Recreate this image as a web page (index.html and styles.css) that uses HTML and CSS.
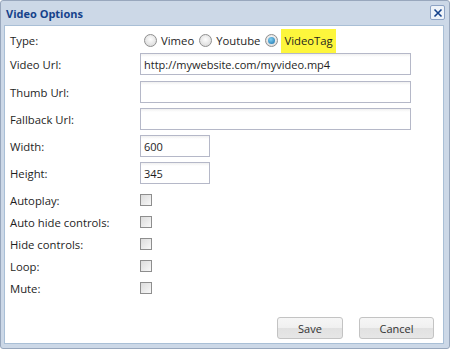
FILE: index.html
```html
<!DOCTYPE html>
<html lang="en">
<head>
    <meta charset="UTF-8">
    <title>Video Options</title>
    <link rel="stylesheet" href="styles.css">
</head>
<body>
    <div class="dialog">
        <div class="dialog-header">
            <span class="dialog-title">Video Options</span>
            <span class="close-btn">
                <svg width="10" height="10" viewBox="0 0 10 10"><path d="M1.5 1.5 L8.5 8.5 M8.5 1.5 L1.5 8.5" stroke="#15428b" stroke-width="1.6"/></svg>
            </span>
        </div>
        <div class="dialog-body">
            <div class="row row-type">
                <label>Type:</label>
                <div class="radios">
                    <span class="radio"></span><span class="radio-label">Vimeo</span>
                    <span class="radio"></span><span class="radio-label">Youtube</span>
                    <span class="radio checked"></span><span class="radio-label highlight">VideoTag</span>
                </div>
            </div>
            <div class="row row-input first">
                <label>Video Url:</label>
                <input type="text" class="wide" value="http://mywebsite.com/myvideo.mp4">
            </div>
            <div class="row row-input">
                <label>Thumb Url:</label>
                <input type="text" class="wide">
            </div>
            <div class="row row-input">
                <label>Fallback Url:</label>
                <input type="text" class="wide">
            </div>
            <div class="row row-input">
                <label>Width:</label>
                <input type="text" class="narrow" value="600">
            </div>
            <div class="row row-input">
                <label>Height:</label>
                <input type="text" class="narrow" value="345">
            </div>
            <div class="row row-check"><label>Autoplay:</label><span class="checkbox"></span></div>
            <div class="row row-check"><label>Auto hide controls:</label><span class="checkbox"></span></div>
            <div class="row row-check"><label>Hide controls:</label><span class="checkbox"></span></div>
            <div class="row row-check"><label>Loop:</label><span class="checkbox"></span></div>
            <div class="row row-check"><label>Mute:</label><span class="checkbox"></span></div>

            <div class="buttons">
                <button class="save">Save</button>
                <button class="cancel">Cancel</button>
            </div>
        </div>
    </div>
</body>
</html>
```
FILE: styles.css
```css
body {
    margin: 0;
    padding: 0;
    font-family: "Open Sans", "Liberation Sans", sans-serif;
    font-size: 11.3px;
    color: #1e1e1e;
    background: #fff;
}
.dialog {
    box-sizing: border-box;
    width: 450px;
    height: 349px;
    border: 1px solid #98a7bd;
    border-radius: 3px;
    background: #ccd8e7;
    display: flex;
    flex-direction: column;
    padding: 0 5px 4px 3px;
}
.dialog-header {
    height: 24px;
    display: flex;
    align-items: center;
    justify-content: space-between;
    padding-left: 2px;
}
.dialog-title {
    font-weight: bold;
    font-size: 11px;
    color: #15428b;
}
.close-btn {
    width: 13px;
    height: 13px;
    border: 1px solid #8da3c4;
    border-radius: 2px;
    background: #eef3f9;
    display: flex;
    align-items: center;
    justify-content: center;
    margin-right: -1px;
    margin-top: -1px;
}
.dialog-body {
    flex: 1;
    background: #fff;
    border: 1px solid #a9bfd6;
    padding: 2px 0 0 5px;
    display: flex;
    flex-direction: column;
}
.row {
    display: flex;
    align-items: center;
}
.row label {
    width: 130px;
}
.row-type {
    height: 25px;
}
.row-input {
    height: 22px;
    margin-bottom: 5px;
}
.row-input.first {
    margin-bottom: 6px;
}
.row-check {
    height: 22px;
}
.radios {
    display: flex;
    align-items: center;
    margin-left: 4px;
}
.radio {
    box-sizing: border-box;
    width: 13px;
    height: 13px;
    border: 1px solid #8f8f8f;
    border-radius: 50%;
    background: radial-gradient(circle at 50% 40%, #fdfdfd, #d4d4d4);
    margin-right: 4px;
    position: relative;
}
.radio.checked::after {
    content: "";
    position: absolute;
    left: 2px;
    top: 2px;
    width: 7px;
    height: 7px;
    border-radius: 50%;
    background: radial-gradient(circle at 40% 35%, #7fd0f4, #1a6fa8);
}
.radio-label {
    margin-right: 5px;
}
.highlight {
    background: #fdf63c;
    padding: 4px 3px 5px 3px;
    margin-left: -1px;
}
input {
    box-sizing: border-box;
    height: 22px;
    border: 1px solid #b5b8c8;
    background: linear-gradient(#f0f0f0, #fff 3px);
    font-family: inherit;
    font-size: 11px;
    color: #1e1e1e;
    padding: 0 3px;
    margin: 0;
}
input.wide {
    width: 271px;
}
input.narrow {
    width: 70px;
}
.checkbox {
    box-sizing: border-box;
    width: 12px;
    height: 12px;
    border: 1px solid #8e8e8e;
    background: linear-gradient(135deg, #dcdcdc, #f8f8f8);
}
.buttons {
    margin-top: auto;
    margin-bottom: 4px;
    display: flex;
    justify-content: flex-end;
    gap: 16px;
    padding-right: 9px;
}
button {
    height: 22px;
    border: 1px solid #c3c3c3;
    border-radius: 3px;
    background: linear-gradient(#f6f6f6, #f0f0f0 50%, #e1e1e1 51%, #e6e6e6);
    font-family: inherit;
    font-size: 11px;
    color: #333;
    padding: 0;
}
button.save {
    width: 66px;
}
button.cancel {
    width: 75px;
}
```
